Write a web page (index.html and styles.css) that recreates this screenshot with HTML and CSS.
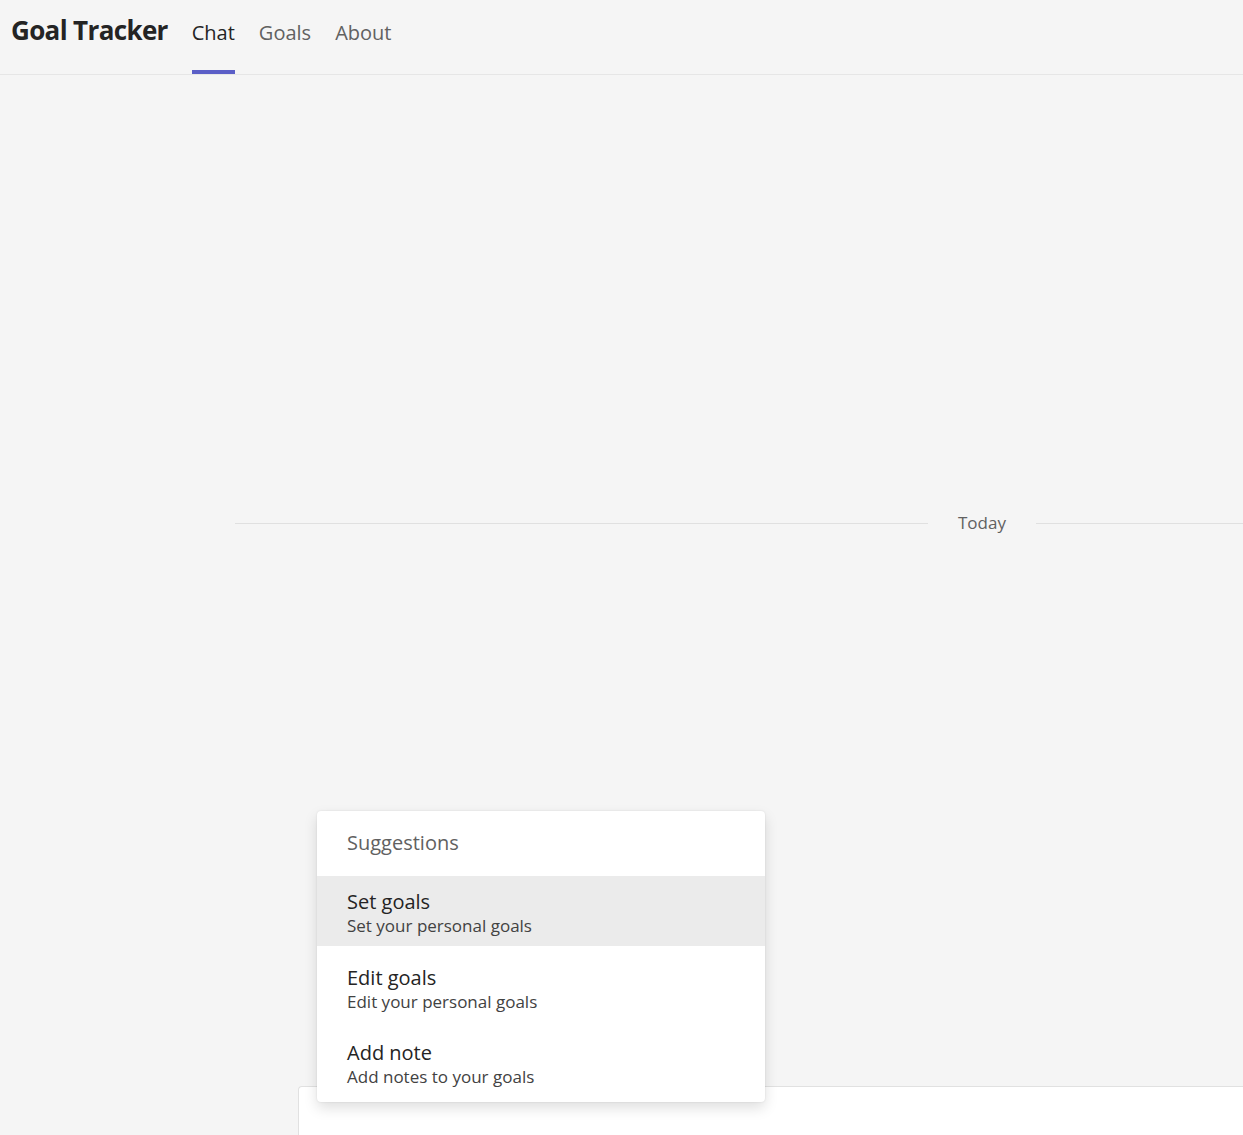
FILE: index.html
```html
<!DOCTYPE html>
<html lang="en">
<head>
    <meta charset="UTF-8">
    <title>Goal Tracker</title>
    <link rel="stylesheet" href="styles.css">
</head>
<body>
    <header class="app-header">
        <h1 class="app-title">Goal Tracker</h1>
        <nav class="tabs">
            <a class="tab active">Chat</a>
            <a class="tab">Goals</a>
            <a class="tab">About</a>
        </nav>
    </header>

    <main class="chat">
        <div class="day-divider">
            <span class="line left"></span>
            <span class="day-label">Today</span>
            <span class="line right"></span>
        </div>

        <div class="composer-wrap">
            <!-- suggestions popup above the compose box -->
            <div class="suggestions">
                <div class="suggestions-title">Suggestions</div>
                <div class="suggestion selected">
                    <div class="suggestion-name">Set goals</div>
                    <div class="suggestion-desc">Set your personal goals</div>
                </div>
                <div class="suggestion">
                    <div class="suggestion-name">Edit goals</div>
                    <div class="suggestion-desc">Edit your personal goals</div>
                </div>
                <div class="suggestion">
                    <div class="suggestion-name">Add note</div>
                    <div class="suggestion-desc">Add notes to your goals</div>
                </div>
            </div>
            <div class="composer"></div>
        </div>
    </main>
</body>
</html>
```

FILE: styles.css
```css
html, body {
    height: 100%;
}
body {
    margin: 0;
    display: flex;
    flex-direction: column;
    background: #f5f5f5;
    font-family: "Open Sans", "Noto Sans", sans-serif;
    color: #242424;
    overflow: hidden;
}
.app-header {
    display: flex;
    align-items: stretch;
    height: 74px;
    padding-left: 11px;
    border-bottom: 1px solid #e6e6e6;
    box-sizing: content-box;
}
.app-title {
    margin: 0 24px 0 0;
    font-size: 26px;
    font-weight: 700;
    line-height: 60px;
    letter-spacing: -0.65px;
}
.tabs {
    display: flex;
    gap: 24px;
}
.tab {
    font-size: 20px;
    color: #616161;
    line-height: 66px;
    border-bottom: 4px solid transparent;
    box-sizing: border-box;
    height: 74px;
}
.tab.active {
    color: #242424;
    border-bottom-color: #5b5fc7;
}
.chat {
    flex: 1;
    position: relative;
    display: flex;
    flex-direction: column;
}
.day-divider {
    display: flex;
    align-items: center;
    margin: 436px 0 0 235px;
}
.line {
    height: 1px;
    background: #e0e0e0;
}
.line.left {
    width: 693px;
}
.line.right {
    flex: 1;
}
.day-label {
    padding: 0 30px;
    font-size: 17px;
    color: #616161;
    line-height: 24px;
}
.composer-wrap {
    margin-top: auto;
    margin-left: 298px;
    position: relative;
}
.composer {
    height: 49px;
    background: #fff;
    border-top: 1px solid #e1e1e1;
    border-left: 1px solid #e1e1e1;
    border-top-left-radius: 4px;
    box-sizing: border-box;
}
.suggestions {
    position: absolute;
    left: 19px;
    bottom: 33px;
    width: 448px;
    background: #fff;
    border-radius: 4px;
    box-shadow: 0 6px 14px rgba(0, 0, 0, 0.13), 0 0 2px rgba(0, 0, 0, 0.11);
    padding-bottom: 6px;
    z-index: 2;
}
.suggestions-title {
    height: 65px;
    padding: 20px 30px 0;
    box-sizing: border-box;
    font-size: 20px;
    color: #616161;
    line-height: 24px;
}
.suggestion {
    height: 75px;
    padding: 19px 30px 0;
    box-sizing: border-box;
}
.suggestion.selected {
    height: 70px;
    padding-top: 13px;
    background: #ebebeb;
}
.suggestion-name {
    font-size: 20px;
    line-height: 26px;
    color: #242424;
}
.suggestion-desc {
    font-size: 17px;
    line-height: 22px;
    color: #424242;
}
```
